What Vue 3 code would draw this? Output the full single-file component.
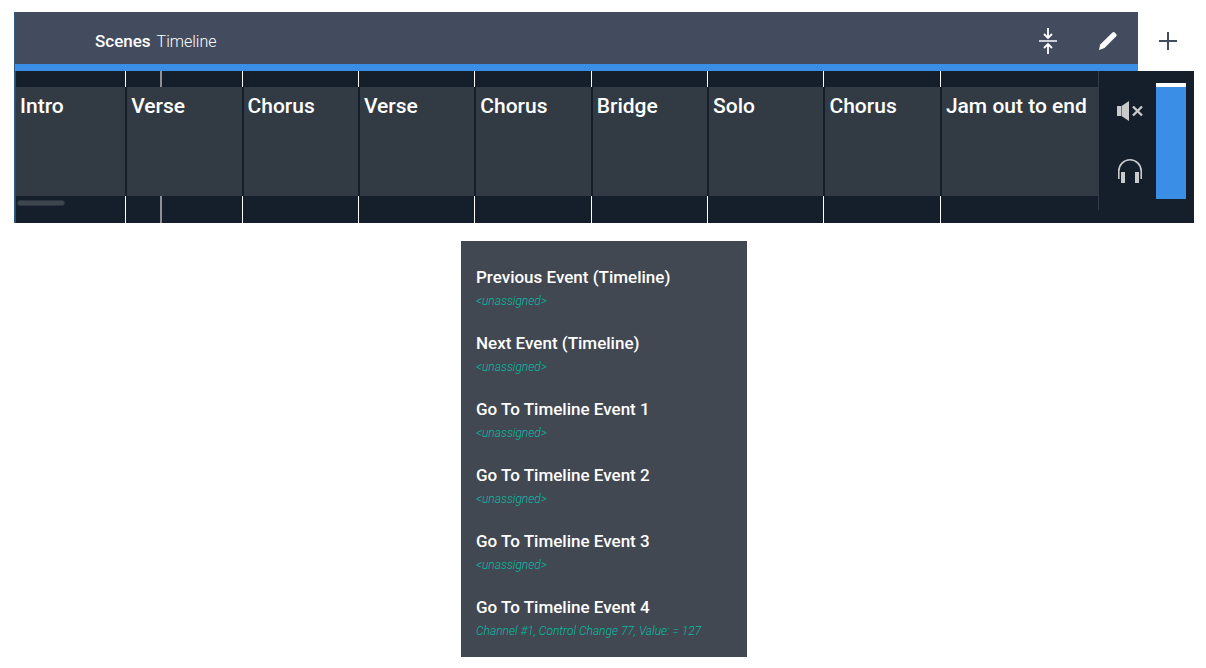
<script setup>
import { ref } from 'vue'

// Song sections shown on the timeline, size is the relative length
const sections = ref([
    { id: 1, name: 'Intro', size: 110 },
    { id: 2, name: 'Verse', size: 116.3 },
    { id: 3, name: 'Chorus', size: 116.3 },
    { id: 4, name: 'Verse', size: 116.3 },
    { id: 5, name: 'Chorus', size: 116.3 },
    { id: 6, name: 'Bridge', size: 116.3 },
    { id: 7, name: 'Solo', size: 116.3 },
    { id: 8, name: 'Chorus', size: 116.3 },
    { id: 9, name: 'Jam out to end', size: 158.3 },
])

const playhead = ref(13.4)
const volume = ref(100)
const muted = ref(true)

const bindings = ref([
    { id: 'prev', name: 'Previous Event (Timeline)', value: '<unassigned>' },
    { id: 'next', name: 'Next Event (Timeline)', value: '<unassigned>' },
    { id: 'go1', name: 'Go To Timeline Event 1', value: '<unassigned>' },
    { id: 'go2', name: 'Go To Timeline Event 2', value: '<unassigned>' },
    { id: 'go3', name: 'Go To Timeline Event 3', value: '<unassigned>' },
    {
        id: 'go4',
        name: 'Go To Timeline Event 4',
        value: 'Channel #1, Control Change 77, Value: = 127',
    },
])
</script>

<template>
    <main class="page">
        <section class="rack">
            <div class="top-row">
                <header class="header">
                    <h1 class="title">Scenes</h1>
                    <span class="subtitle">Timeline</span>
                    <div class="actions">
                        <button class="icon-button" aria-label="Collapse">
                            <svg width="30" height="30" viewBox="0 0 30 30">
                                <g fill="none" stroke="#fff" stroke-width="1.800">
                                    <path d="M15 2v10M11 8l4 4 4-4" />
                                    <path d="M15 28V18M11 22l4-4 4 4" />
                                    <path d="M6 15h18" stroke="#dcdee2" />
                                </g>
                            </svg>
                        </button>
                        <button class="icon-button" aria-label="Edit">
                            <svg width="30" height="30" viewBox="0 0 30 30">
                                <path
                                    d="M6 24l1.200-5.500L19.500 6.600q1.200-1 2.300 0l1.400 1.400q1 1.200 0 2.300L11.500 22z"
                                    fill="#fff"
                                />
                            </svg>
                        </button>
                    </div>
                </header>
                <button class="icon-button add" aria-label="Add">
                    <svg width="30" height="30" viewBox="0 0 30 30">
                        <path
                            d="M15 6v18M6 15h18"
                            fill="none"
                            stroke="#434c5f"
                            stroke-width="2"
                        />
                    </svg>
                </button>
            </div>

            <div class="body">
                <div class="timeline">
                    <div class="playhead" :style="{ left: playhead + '%' }"></div>
                    <div
                        v-for="section in sections"
                        :key="section.id"
                        class="section"
                        :style="{ flexGrow: section.size }"
                    >
                        <div class="block">{{ section.name }}</div>
                    </div>
                    <div class="scrollbar"></div>
                </div>

                <div class="mixer">
                    <div class="mixer-buttons">
                        <button
                            class="icon-button"
                            aria-label="Mute"
                            :aria-pressed="muted"
                            @click="muted = !muted"
                        >
                            <svg width="30" height="30" viewBox="0 0 30 30">
                                <path
                                    d="M2 10h4v10H2zM6.500 10l7.500-5v20l-7.500-5z"
                                    fill="#c9cacb"
                                />
                                <path
                                    v-if="muted"
                                    d="M18 10.500l9 9M27 10.500l-9 9"
                                    stroke="#c9cacb"
                                    stroke-width="2.400"
                                />
                            </svg>
                        </button>
                        <button class="icon-button" aria-label="Headphones">
                            <svg width="30" height="30" viewBox="0 0 30 30">
                                <path
                                    d="M3.800 23V15a11.200 11.200 0 0 1 22.400 0v8"
                                    fill="none"
                                    stroke="#c9cacb"
                                    stroke-width="1.600"
                                />
                                <path
                                    d="M6 16h4v11H6zM20 16h4v11h-4z"
                                    fill="#c9cacb"
                                />
                            </svg>
                        </button>
                    </div>
                    <input
                        v-model="volume"
                        class="fader"
                        type="range"
                        min="0"
                        max="100"
                        aria-label="Volume"
                    />
                </div>
            </div>
        </section>

        <ul class="bindings">
            <li v-for="binding in bindings" :key="binding.id" class="binding">
                <p class="binding-name">{{ binding.name }}</p>
                <p class="binding-value">{{ binding.value }}</p>
            </li>
        </ul>
    </main>
</template>

<style>
body {
    background-color: #fff;
}
</style>

<style scoped>
.page {
    padding: 12px 12px 11px 14px;
    font-family: Roboto, 'Liberation Sans', sans-serif;
    color: #fff;
}
.rack {
    border-left: 1px solid #2f5b82;
}
.top-row {
    display: flex;
}
.header {
    flex: 1;
    height: 59px;
    box-sizing: border-box;
    padding: 6px 15px 0 80px;
    display: flex;
    align-items: center;
    background-color: #434c5f;
    border-bottom: 7px solid #3a8ee6;
}
.title {
    margin: 0 6px 0 0;
    font-size: 17px;
    font-weight: 500;
}
.subtitle {
    font-size: 16px;
    font-weight: 300;
}
.actions {
    margin-left: auto;
    display: flex;
    gap: 30px;
}
.icon-button {
    width: 30px;
    height: 30px;
    padding: 0;
    border: none;
    background: none;
    cursor: pointer;
}
.icon-button svg {
    display: block;
}
.add {
    margin: 14px 11px 0 15px;
}
.body {
    display: flex;
    height: 152px;
    background-color: #151f2b;
}
.timeline {
    flex: 1;
    display: flex;
    position: relative;
}
.playhead {
    position: absolute;
    top: 0;
    bottom: 0;
    width: 2px;
    background-color: #8d9197;
}
.section {
    flex: 1 1 0;
    min-width: 0;
    box-sizing: border-box;
    padding: 16px 0 27px;
    position: relative;
    border-left: 1px solid #fff;
}
.section:nth-child(2) {
    border-left-color: #2f4a64;
}
.block {
    height: 109px;
    box-sizing: border-box;
    margin-left: -1px;
    padding: 5px 0 0 4px;
    background-color: #323b44;
    border-left: 2px solid #151f2b;
    font-size: 21px;
    line-height: 28px;
    font-weight: 500;
    white-space: nowrap;
}
.section:nth-child(2) .block {
    margin-left: 0;
    border-left: none;
}
.scrollbar {
    position: absolute;
    left: 2px;
    bottom: 17px;
    width: 48px;
    height: 6px;
    box-sizing: border-box;
    border: 1px solid #2b353f;
    border-radius: 3px;
    background-color: #3d464f;
}
.mixer {
    display: flex;
    height: 139px;
    padding-right: 8px;
    border-left: 1px solid #323b44;
}
.mixer-buttons {
    width: 57px;
    box-sizing: border-box;
    padding: 25px 0 0 16px;
    display: flex;
    flex-direction: column;
    gap: 30px;
}
.fader {
    appearance: none;
    writing-mode: vertical-lr;
    direction: rtl;
    width: 30px;
    height: 116px;
    margin: 12px 0 0;
    background-color: #3a8ee6;
}
.fader::-webkit-slider-thumb {
    appearance: none;
    width: 30px;
    height: 4px;
    border-radius: 0;
    background-color: #fff;
}
.bindings {
    width: 286px;
    box-sizing: border-box;
    margin: 18px auto 0;
    padding: 24px 15px 14px;
    display: flex;
    flex-direction: column;
    gap: 18px;
    list-style: none;
    background-color: #424851;
}
.binding p {
    margin: 0;
    line-height: 24px;
}
.binding .binding-name {
    font-size: 17px;
    font-weight: 500;
}
.binding .binding-value {
    font-size: 12px;
    font-weight: 300;
    font-style: italic;
    color: #06bda6;
}
</style>
